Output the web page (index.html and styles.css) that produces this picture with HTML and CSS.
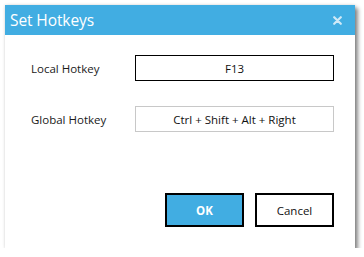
FILE: index.html
```html
<!DOCTYPE html>
<html>
<head>
<meta charset="utf-8">
<link rel="stylesheet" href="styles.css">
</head>
<body>
<div class="dialog">
  <div class="titlebar">
    <span class="title">Set Hotkeys</span>
    <svg class="close" width="9" height="9" viewBox="0 0 9 9"><path d="M1.2 1.2L7.8 7.8M7.8 1.2L1.2 7.8" stroke="#cfe9f7" stroke-width="2.2" stroke-linecap="round"/></svg>
  </div>
  <div class="content">
    <div class="row">
      <span class="label">Local Hotkey</span>
      <div class="field active">F13</div>
    </div>
    <div class="row">
      <span class="label">Global Hotkey</span>
      <div class="field">Ctrl + Shift + Alt + Right</div>
    </div>
  </div>
  <div class="footer">
    <button class="btn ok">OK</button>
    <button class="btn cancel">Cancel</button>
  </div>
</div>
</body>
</html>
```

FILE: styles.css
```css
html, body {
  margin: 0;
  padding: 0;
  background: #ffffff;
}
body {
  padding: 5px 0 0 5px;
  font-family: "Open Sans", "Noto Sans", sans-serif;
}
.dialog {
  width: 350px;
  height: 243px;
  background: #ffffff;
  display: flex;
  flex-direction: column;
  box-shadow: 3px 3px 4px rgba(0,0,0,0.45), 0 0 3px rgba(0,0,0,0.15);
}
.titlebar {
  height: 30px;
  background: #41ade2;
  display: flex;
  align-items: center;
  justify-content: space-between;
  padding: 0 13px 0 5px;
}
.title {
  color: #ffffff;
  font-size: 15.5px;
  letter-spacing: -0.1px;
}
.close {
  display: block;
}
.content {
  padding: 20px 21px 0 26px;
  display: flex;
  flex-direction: column;
  gap: 25px;
}
.row {
  display: flex;
  align-items: center;
}
.label {
  width: 104px;
  font-size: 11.5px;
  color: #1a1a1a;
}
.field {
  flex: 1;
  height: 24px;
  border: 1px solid #c8c8c8;
  display: flex;
  align-items: center;
  justify-content: center;
  font-size: 11.5px;
  color: #111111;
}
.field.active {
  border-color: #000000;
}
.footer {
  margin-top: auto;
  padding: 0 21px 21px 0;
  display: flex;
  justify-content: flex-end;
  gap: 11px;
}
.btn {
  width: 79px;
  height: 34px;
  border: 2px solid #000000;
  font-family: "Open Sans", "Noto Sans", sans-serif;
  font-size: 11.5px;
  padding: 0;
}
.ok {
  background: #41ade2;
  color: #ffffff;
  font-weight: bold;
}
.cancel {
  background: #ffffff;
  color: #111111;
}
```
